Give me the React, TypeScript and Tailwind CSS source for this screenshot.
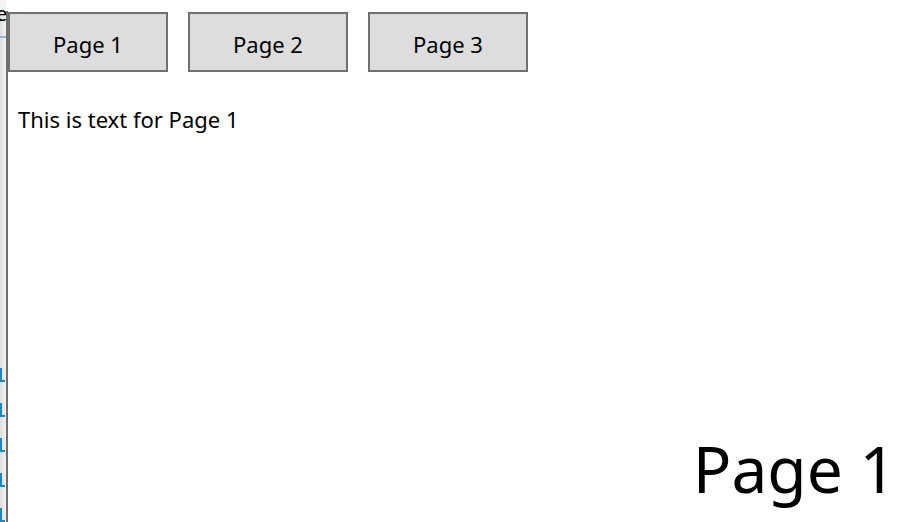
const tabs = ["Page 1", "Page 2", "Page 3"];

function SideStrip() {
  return (
    <div className="relative w-[6px] shrink-0 overflow-hidden bg-gradient-to-r from-[#dcdcdc] to-[#f2f2f2]">
      <div className="h-[12px] bg-[#f4f4f4]" />
      <span className="absolute left-[-4px] top-[4px] text-[20px] leading-none text-black">e</span>
      <div className="absolute left-0 top-[36px] h-[2px] w-full bg-[#9fb4cc]" />
      <div className="absolute bottom-0 left-0 flex flex-col gap-[21px]">
        {[0, 1, 2, 3, 4].map((i) => (
          <div key={i} className="h-[14px] w-[5px] border-b-2 border-l-2 border-[#1e88b8]" />
        ))}
      </div>
    </div>
  );
}

export default function App() {
  return (
    <div
      className="flex h-[522px] w-[903px] overflow-hidden bg-white text-black"
      style={{ fontFamily: '"Noto Sans", sans-serif' }}
    >
      <SideStrip />
      <div className="mt-[11px] w-[2px] shrink-0 bg-[#6d6d6d]" />
      <main className="flex flex-1 flex-col">
        <nav className="flex gap-5 pt-[12px]">
          {tabs.map((t) => (
            <button
              key={t}
              className="h-[60px] w-[160px] border-2 border-[#707070] bg-[#dddddd] pt-[3px] text-[22px] leading-none"
            >
              {t}
            </button>
          ))}
        </nav>
        <p className="pl-[10px] pt-[33px] text-[22px] leading-[28px]">This is text for Page 1</p>
        <div className="flex flex-1 items-end justify-end pb-[21px] pr-[7px]">
          <span className="text-[64px] leading-none">Page 1</span>
        </div>
      </main>
    </div>
  );
}
